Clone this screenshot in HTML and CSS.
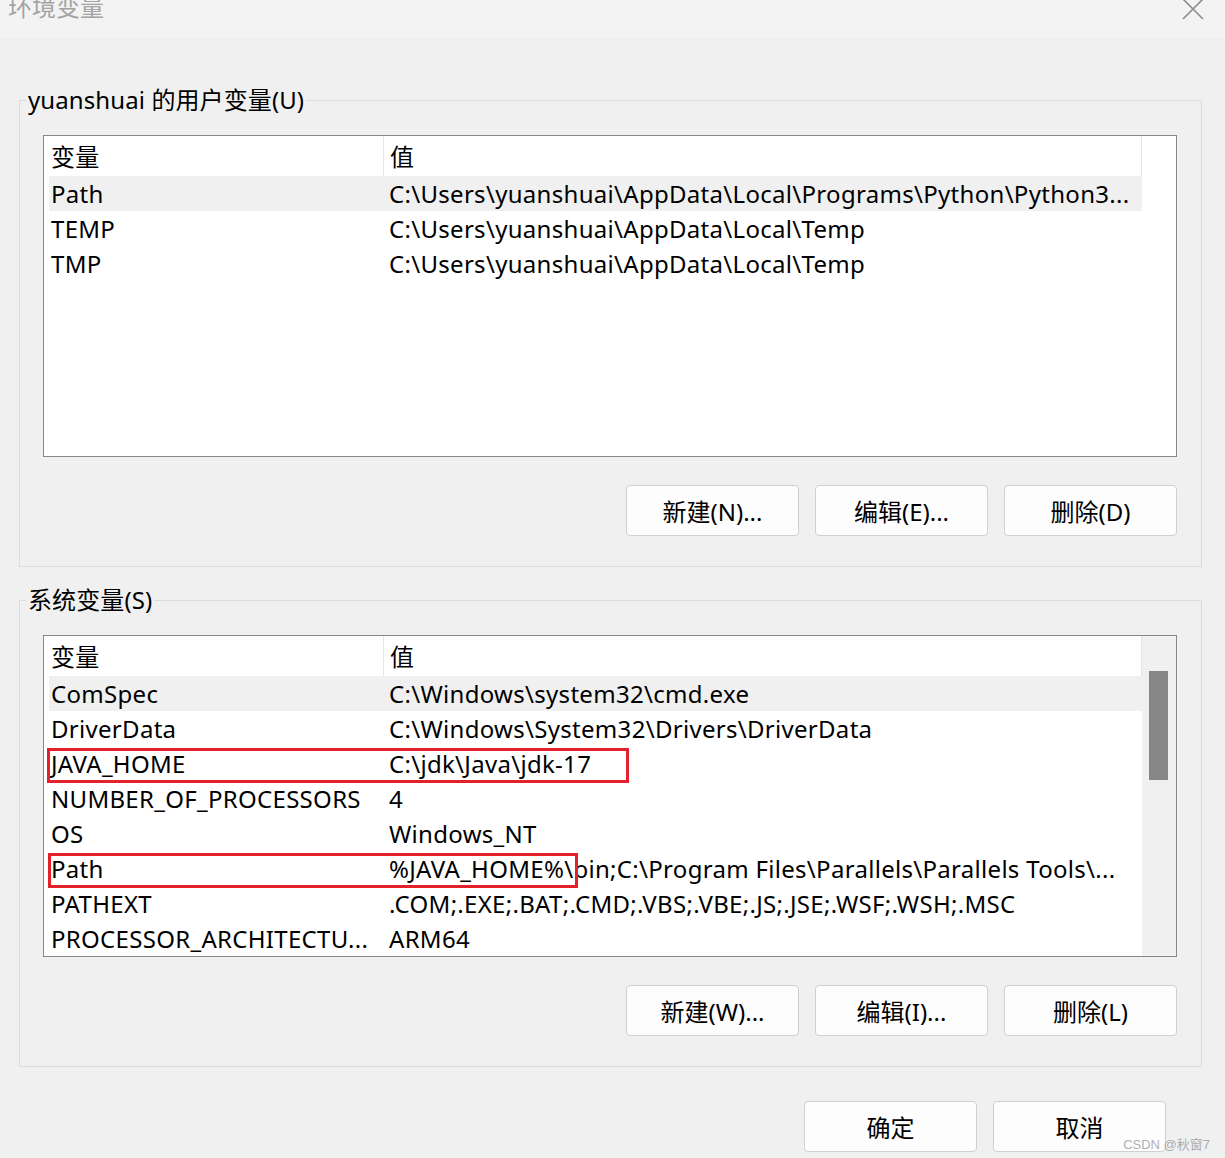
FILE: index.html
```html
<!DOCTYPE html>
<html lang="zh-CN">
<head>
<meta charset="UTF-8">
<meta name="viewport" content="width=device-width, initial-scale=1.0">
<title>环境变量</title>
<link rel="stylesheet" href="styles.css">
</head>
<body>
<div class="titlebar">
  <span class="title">环境变量</span>
  <svg class="close" width="22" height="22" viewBox="0 0 22 22">
    <path d="M1 1 L21 21 M21 1 L1 21" stroke="#8c8c8c" stroke-width="1.6" fill="none"/>
  </svg>
</div>

<fieldset class="group">
  <legend>yuanshuai 的用户变量(U)</legend>
  <div class="group-body">
    <div class="listbox">
      <div class="list-main">
        <div class="row head"><span class="col-name">变量</span><span class="col-value">值</span></div>
        <div class="row selected"><span class="col-name">Path</span><span class="col-value">C:\Users\yuanshuai\AppData\Local\Programs\Python\Python3...</span></div>
        <div class="row"><span class="col-name">TEMP</span><span class="col-value">C:\Users\yuanshuai\AppData\Local\Temp</span></div>
        <div class="row"><span class="col-name">TMP</span><span class="col-value">C:\Users\yuanshuai\AppData\Local\Temp</span></div>
      </div>
      <div class="list-side"></div>
    </div>
    <div class="buttons">
      <button>新建(N)...</button>
      <button>编辑(E)...</button>
      <button>删除(D)</button>
    </div>
  </div>
</fieldset>

<fieldset class="group system">
  <legend>系统变量(S)</legend>
  <div class="group-body">
    <div class="listbox">
      <div class="list-main">
        <div class="row head"><span class="col-name">变量</span><span class="col-value">值</span></div>
        <div class="row selected"><span class="col-name">ComSpec</span><span class="col-value">C:\Windows\system32\cmd.exe</span></div>
        <div class="row"><span class="col-name">DriverData</span><span class="col-value">C:\Windows\System32\Drivers\DriverData</span></div>
        <div class="row">
          <span class="col-name">JAVA_HOME</span><span class="col-value">C:\jdk\Java\jdk-17</span>
          <span class="mark mark-java"></span>
        </div>
        <div class="row"><span class="col-name">NUMBER_OF_PROCESSORS</span><span class="col-value">4</span></div>
        <div class="row"><span class="col-name">OS</span><span class="col-value">Windows_NT</span></div>
        <div class="row">
          <span class="col-name">Path</span><span class="col-value">%JAVA_HOME%\bin;C:\Program Files\Parallels\Parallels Tools\...</span>
          <span class="mark mark-path"></span>
        </div>
        <div class="row"><span class="col-name">PATHEXT</span><span class="col-value">.COM;.EXE;.BAT;.CMD;.VBS;.VBE;.JS;.JSE;.WSF;.WSH;.MSC</span></div>
        <div class="row"><span class="col-name">PROCESSOR_ARCHITECTU...</span><span class="col-value">ARM64</span></div>
      </div>
      <div class="scrollbar"><div class="thumb"></div></div>
    </div>
    <div class="buttons">
      <button>新建(W)...</button>
      <button>编辑(I)...</button>
      <button>删除(L)</button>
    </div>
  </div>
</fieldset>

<div class="buttons footer">
  <button>确定</button>
  <button>取消</button>
</div>

<div class="watermark">CSDN @秋窗7</div>
</body>
</html>
```

FILE: styles.css
```css
body {
  margin: 0;
  background: #f0f0f0;
  font-family: 'Noto Sans', 'Noto Sans CJK SC', sans-serif;
  font-size: 24px;
  color: #000;
  height: 1158px;
  overflow: hidden;
}

.titlebar {
  height: 38px;
  background: #f3f3f3;
  display: flex;
  justify-content: space-between;
  align-items: flex-start;
  padding: 0 21px 0 8px;
  overflow: hidden;
}

.title {
  font-size: 24px;
  line-height: 24px;
  margin-top: -5px;
  color: #a3a3a3;
}

.close {
  margin-top: -2px;
}

.group {
  margin: 46px 23px 0 19px;
  padding: 0;
  border: 1px solid #dcdcdc;
  min-width: 0;
}

.group.system {
  margin-top: 17px;
}

.group legend {
  margin-left: 6px;
  padding: 0 2px;
  line-height: 32px;
  letter-spacing: 0.1px;
}

.group-body {
  padding: 19px 24px 30px 23px;
}

.listbox {
  height: 322px;
  box-sizing: border-box;
  border: 1px solid #828790;
  background: #fff;
  display: flex;
  overflow: hidden;
}

.list-main {
  flex: 1;
  padding-left: 5px;
  min-width: 0;
}

.list-side {
  width: 34px;
}

.row {
  display: flex;
  height: 35px;
  line-height: 35px;
  white-space: nowrap;
  letter-spacing: 0.3px;
  position: relative;
}

.row.head {
  height: 40px;
  line-height: 42px;
}

.row.selected {
  background: #f0f0f0;
}

.col-name {
  width: 332px;
  padding-left: 2px;
  overflow: hidden;
}

.col-value {
  flex: 1;
  padding-left: 6px;
  overflow: hidden;
}

.row.head .col-name {
  border-right: 1px solid #e5e5e5;
}

.row.head .col-value {
  border-right: 1px solid #e5e5e5;
}

.scrollbar {
  width: 34px;
  background: #f0f0f0;
}

.thumb {
  width: 19px;
  height: 109px;
  margin: 35px 0 0 7px;
  background: #868686;
}

.mark {
  position: absolute;
  top: 2px;
  height: 35px;
  box-sizing: border-box;
  border: 3px solid #e4202a;
}

.mark-java {
  left: -2px;
  width: 582px;
}

.mark-path {
  left: -1px;
  width: 530px;
}

.buttons {
  display: flex;
  justify-content: flex-end;
  gap: 16px;
  margin-top: 28px;
}

button {
  width: 173px;
  height: 51px;
  font-family: inherit;
  font-size: 24px;
  color: #000;
  background: #fdfdfd;
  border: 1px solid #d0d0d0;
  border-radius: 4px;
  padding: 0;
}

.footer {
  margin: 34px 59px 0 0;
}

.watermark {
  position: absolute;
  right: 15px;
  top: 1134px;
  font-family: 'Liberation Sans', 'Noto Sans CJK SC', sans-serif;
  font-size: 13px;
  color: rgba(140, 140, 140, 0.7);
}
```
